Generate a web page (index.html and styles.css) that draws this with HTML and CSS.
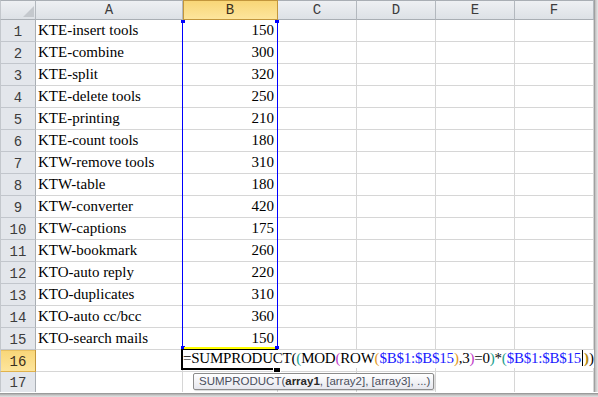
FILE: index.html
```html
<!DOCTYPE html>
<html>
<head>
<meta charset="utf-8">
<link rel="stylesheet" href="styles.css">
</head>
<body>
<div class="frame">
  <div class="wrap">
    <div class="sheet">
      <div class="corner"><svg width="35" height="19" viewBox="0 0 35 19"><polygon points="33,6 33,17 22,17" fill="#c4c8cd"/></svg></div>
      <div class="ch">A</div><div class="ch sel">B</div><div class="ch">C</div><div class="ch">D</div><div class="ch">E</div><div class="ch">F</div>

      <div class="rh">1</div><div class="c t">KTE-insert tools</div><div class="c n">150</div><div class="c"></div><div class="c"></div><div class="c"></div><div class="c"></div>
      <div class="rh">2</div><div class="c t">KTE-combine</div><div class="c n">300</div><div class="c"></div><div class="c"></div><div class="c"></div><div class="c"></div>
      <div class="rh">3</div><div class="c t">KTE-split</div><div class="c n">320</div><div class="c"></div><div class="c"></div><div class="c"></div><div class="c"></div>
      <div class="rh">4</div><div class="c t">KTE-delete tools</div><div class="c n">250</div><div class="c"></div><div class="c"></div><div class="c"></div><div class="c"></div>
      <div class="rh">5</div><div class="c t">KTE-printing</div><div class="c n">210</div><div class="c"></div><div class="c"></div><div class="c"></div><div class="c"></div>
      <div class="rh">6</div><div class="c t">KTE-count tools</div><div class="c n">180</div><div class="c"></div><div class="c"></div><div class="c"></div><div class="c"></div>
      <div class="rh">7</div><div class="c t">KTW-remove tools</div><div class="c n">310</div><div class="c"></div><div class="c"></div><div class="c"></div><div class="c"></div>
      <div class="rh">8</div><div class="c t">KTW-table</div><div class="c n">180</div><div class="c"></div><div class="c"></div><div class="c"></div><div class="c"></div>
      <div class="rh">9</div><div class="c t">KTW-converter</div><div class="c n">420</div><div class="c"></div><div class="c"></div><div class="c"></div><div class="c"></div>
      <div class="rh">10</div><div class="c t">KTW-captions</div><div class="c n">175</div><div class="c"></div><div class="c"></div><div class="c"></div><div class="c"></div>
      <div class="rh">11</div><div class="c t">KTW-bookmark</div><div class="c n">260</div><div class="c"></div><div class="c"></div><div class="c"></div><div class="c"></div>
      <div class="rh">12</div><div class="c t">KTO-auto reply</div><div class="c n">220</div><div class="c"></div><div class="c"></div><div class="c"></div><div class="c"></div>
      <div class="rh">13</div><div class="c t">KTO-duplicates</div><div class="c n">310</div><div class="c"></div><div class="c"></div><div class="c"></div><div class="c"></div>
      <div class="rh">14</div><div class="c t">KTO-auto cc/bcc</div><div class="c n">360</div><div class="c"></div><div class="c"></div><div class="c"></div><div class="c"></div>
      <div class="rh">15</div><div class="c t">KTO-search mails</div><div class="c n">150</div><div class="c"></div><div class="c"></div><div class="c"></div><div class="c"></div>
      <div class="rh sel">16</div><div class="c"></div><div class="c"></div><div class="c"></div><div class="c"></div><div class="c"></div><div class="c"></div>
      <div class="rh last">17</div><div class="c last"></div><div class="c last"></div><div class="c last"></div><div class="c last"></div><div class="c last"></div><div class="c last"></div>
    </div>
    <div class="vshadow"></div>
  </div>
  <div class="hshadow"></div>

  <div class="range"></div>
  <div class="knob k1"></div><div class="knob k2"></div><div class="knob k3"></div><div class="knob k4"></div>
  <div class="yline"></div>
  <div class="editor">=SUMPRODUCT<span class="p0">(</span><span class="p1">(</span>MOD<span class="p2">(</span>ROW<span class="p3">(</span><span class="ref">$B$1:$B$15</span><span class="p3">)</span>,3<span class="p2">)</span>=0<span class="p1">)</span>*<span class="p1">(</span><span class="ref">$B$1:$B$15</span><span class="caret"></span><span class="p1 m">)</span>)</div>
  <div class="active"></div>
  <div class="handle"></div>
  <div class="tip">SUMPRODUCT(<b>array1</b>, [array2], [array3], ...)</div>
</div>
</body>
</html>
```
FILE: styles.css
```css
html, body {
  margin: 0;
  padding: 0;
  background: #ffffff;
}
.frame {
  position: relative;
  width: 598px;
  height: 397px;
  overflow: hidden;
  background: #ffffff;
}
.wrap {
  display: flex;
  height: 392px;
}
.sheet {
  display: grid;
  width: 594px;
  grid-template-columns: 36px 147px 95px 79px 79px 79px 79px;
  grid-template-rows: 20px repeat(16, 22px) 20px;
}
.vshadow {
  width: 4px;
  background: linear-gradient(to right, #8e8e8e, #c8c8c8 40%, #e6e6e6);
}
.hshadow {
  height: 5px;
  border-top: 1px solid #ffffff;
  box-sizing: border-box;
  background: linear-gradient(#8e8e8e, #c4c4c4 50%, #e2e2e2);
}
.corner, .ch, .rh, .c {
  box-sizing: border-box;
}
.corner {
  background: linear-gradient(#eef0f3, #dde1e6);
  border-top: 1px solid #a9aeb4;
  border-right: 1px solid #b3b8be;
  border-bottom: 1px solid #a9aeb4;
  border-left: 1px solid #c3c7cc;
}
.corner svg { display: block; margin-top: -1px; }
.ch {
  display: flex;
  align-items: flex-end;
  justify-content: center;
  background: linear-gradient(#eef0f3, #dde1e6);
  border-top: 1px solid #a9aeb4;
  border-right: 1px solid #b3b8be;
  border-bottom: 1px solid #a9aeb4;
  font: 14px/17px "Liberation Mono", "DejaVu Sans Mono", monospace;
  color: #3c3c3c;
}
.ch.sel {
  background: linear-gradient(#f8d677, #fde59c);
  border-top-color: #c2963c;
  border-right-color: #c2963c;
  border-bottom-color: #c2963c;
  box-shadow: inset 1px 0 0 #c2963c;
  color: #3a3020;
}
.rh {
  display: flex;
  align-items: center;
  justify-content: center;
  padding-top: 3px;
  background: #e3e6eb;
  border-right: 1px solid #a9aeb4;
  border-bottom: 1px solid #c2c6cc;
  border-left: 1px solid #c3c7cc;
  font: 14px/17px "Liberation Mono", "DejaVu Sans Mono", monospace;
  color: #3c3c3c;
}
.rh.sel {
  background: linear-gradient(#f8d677, #fde59c);
  border-bottom-color: #e0b24c;
  border-right-color: #c2963c;
  box-shadow: inset 0 1px 0 #e8c060;
  color: #3a3020;
}
.c {
  display: flex;
  align-items: flex-end;
  padding: 0 3px 2px 2px;
  border-right: 1px solid #d6d6d6;
  border-bottom: 1px solid #d6d6d6;
  font: 15px/17px "Liberation Serif", "Times New Roman", serif;
  color: #000000;
  white-space: nowrap;
  overflow: hidden;
}
.c.n { justify-content: flex-end; }
.c.last, .rh.last { border-bottom: none; }

/* referenced range B1:B15 */
.range {
  position: absolute;
  left: 182px;
  top: 20px;
  width: 96px;
  height: 328px;
  box-sizing: border-box;
  border-left: 1px solid #0000ff;
  border-right: 1px solid #0000ff;
}
.knob {
  position: absolute;
  width: 4px;
  height: 3px;
  background: #0000ff;
}
.k1 { left: 181px; top: 20px; }
.k2 { left: 275px; top: 20px; }
.k3 { left: 181px; top: 346px; }
.k4 { left: 275px; top: 346px; }
.yline {
  position: absolute;
  left: 184px;
  top: 347px;
  width: 91px;
  height: 2px;
  background: #ffff00;
}

/* in-cell editor */
.editor {
  position: absolute;
  left: 183px;
  top: 350px;
  width: 411px;
  height: 18px;
  background: #ffffff;
  font: 15px/17px "Liberation Serif", "Times New Roman", serif;
  letter-spacing: -0.22px;
  color: #000000;
  white-space: nowrap;
}
.ref { color: #1a1aff; }
.p1 { color: #19a08e; }
.p2 { color: #c03cc8; }
.p3 { color: #e39a1c; }
.m { font-weight: bold; color: #b48a10; }
.caret {
  display: inline-block;
  width: 1px;
  height: 16px;
  margin: 0 1px;
  background: #000000;
  vertical-align: -3px;
}
.active {
  position: absolute;
  left: 181px;
  top: 349px;
  width: 97px;
  height: 21px;
  box-sizing: border-box;
  border-left: 2px solid #000000;
  border-top: 1px solid #000000;
  border-bottom: 2px solid #000000;
}
.handle {
  position: absolute;
  left: 274px;
  top: 368px;
  width: 6px;
  height: 4px;
  background: #000000;
  box-shadow: 0 0 0 1px #ffffff;
}
.tip {
  position: absolute;
  left: 193px;
  top: 373px;
  width: 241px;
  height: 17px;
  box-sizing: border-box;
  padding-left: 5px;
  border: 1px solid #8c8c8c;
  border-radius: 2px;
  background: linear-gradient(#ffffff, #e6e7ee);
  box-shadow: 1px 1px 1px rgba(0,0,0,0.15);
  font: 11.5px/15px "Liberation Sans", Arial, sans-serif;
  letter-spacing: 0;
  color: #4a4e5c;
  white-space: nowrap;
}
.tip b { color: #2a2a2a; }
```
